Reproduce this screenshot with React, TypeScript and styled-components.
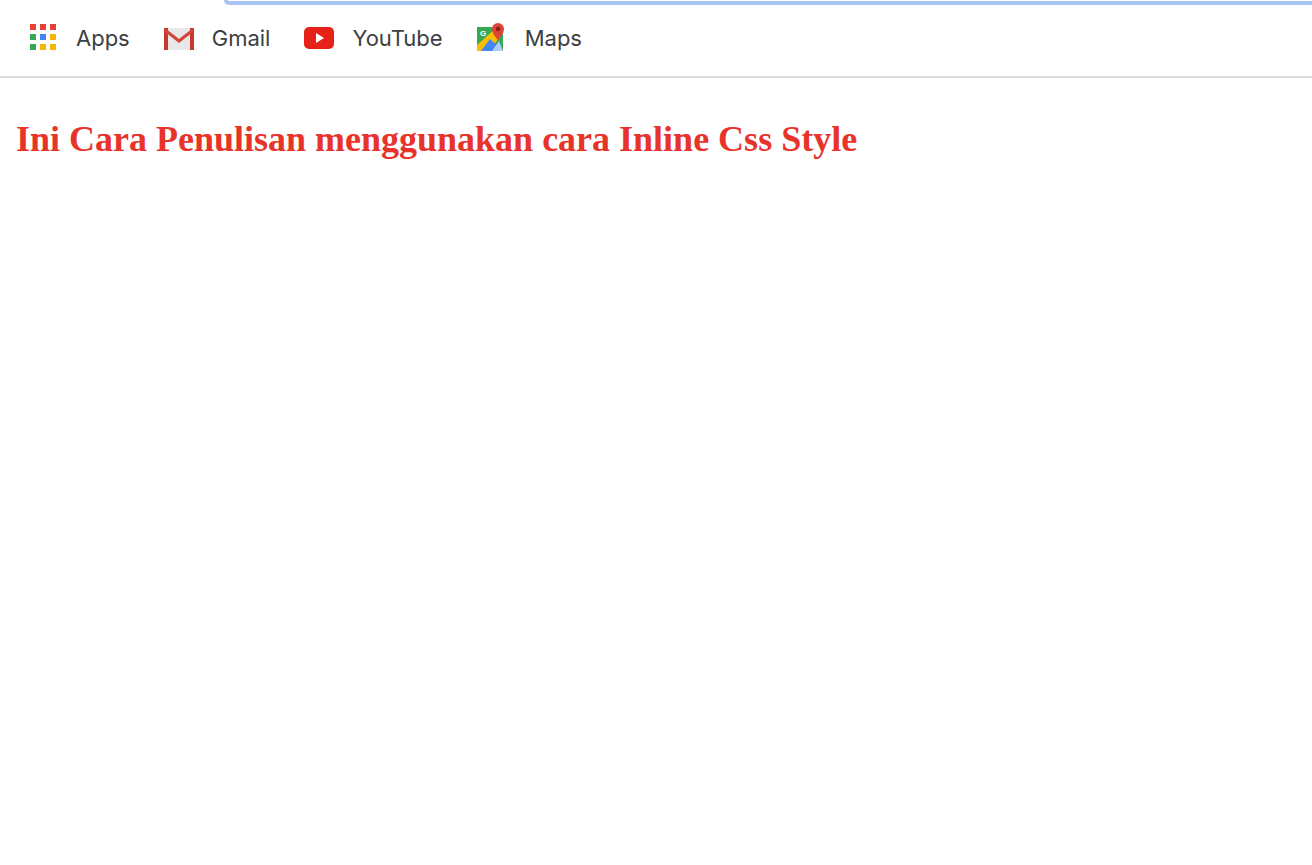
import React from "react";
import styled, { createGlobalStyle } from "styled-components";

const Global = createGlobalStyle`
  body { margin: 0; background: #fff; }
`;

const Chrome = styled.div`
  height: 76px;
  border-bottom: 2px solid #dadce0;
  display: flex;
  flex-direction: column;
`;

const Omnibox = styled.div`
  margin-left: 224px;
  height: 1px;
  border: 4px solid #a8c4f5;
  border-top: none;
  border-right: none;
  border-bottom-left-radius: 14px;
`;

const Bookmarks = styled.div`
  flex: 1;
  display: flex;
  align-items: center;
  padding-left: 30px;
  gap: 34px;
  margin-top: -5px;
`;

const Mark = styled.div`
  display: flex;
  align-items: center;
  gap: 18px;
  font-family: Inter, "Liberation Sans", sans-serif;
  font-size: 22px;
  color: #3c4043;
`;

const Heading = styled.h1`
  margin: 40px 16px;
  font-family: "Liberation Serif", serif;
  font-weight: bold;
  font-size: 36px;
  color: #e8332a;
`;

const AppsIcon = () => {
  const c = ["#e94235", "#e94235", "#e94235", "#34a853", "#4285f4", "#f4b400", "#34a853", "#f4b400", "#f4b400"];
  return (
    <svg width="28" height="28" viewBox="0 0 28 28">
      {c.map((f, i) => (
        <rect key={i} x={(i % 3) * 10} y={Math.floor(i / 3) * 10} width="6" height="6" fill={f} />
      ))}
    </svg>
  );
};

const GmailIcon = () => (
  <svg width="30" height="24" viewBox="0 0 30 24">
    <rect x="0" y="2" width="30" height="22" fill="#e8e8e8" />
    <path d="M0 2 L15 14 L30 2" fill="none" stroke="#d8d8d8" strokeWidth="1" />
    <path d="M0 2 h4 v22 h-4z M26 2 h4 v22 h-4z" fill="#c5392c" />
    <path d="M1 2 L15 13 L29 2 L29 6 L15 17 L1 6z" fill="#d44638" />
  </svg>
);

const YoutubeIcon = () => (
  <svg width="30" height="22" viewBox="0 0 30 22">
    <rect width="30" height="22" rx="5" fill="#e62117" />
    <path d="M12 6 L20 11 L12 16z" fill="#fff" />
  </svg>
);

const MapsIcon = () => (
  <svg width="30" height="30" viewBox="0 0 30 30">
    <rect x="0" y="4" width="26" height="24" fill="#34a853" />
    <path d="M0 28 L0 22 L20 4 L26 4 L26 10 L12 28z" fill="#fbbc04" />
    <path d="M4 28 L13 16 L26 28z" fill="#4285f4" />
    <path d="M15 28 L22 18 L26 28z" fill="#aecbfa" />
    <text x="3" y="13" fontSize="8" fill="#fff" fontFamily="Liberation Sans, sans-serif" fontWeight="bold">G</text>
    <path d="M21 0 a6 6 0 0 1 6 6 c0 5 -6 10 -6 12 c0 -2 -6 -7 -6 -12 a6 6 0 0 1 6 -6z" fill="#db4437" />
    <circle cx="21" cy="6" r="2.2" fill="#8b1c12" />
  </svg>
);

export default function App() {
  return (
    <>
      <Global />
      <Chrome>
        <Omnibox />
        <Bookmarks>
          <Mark><AppsIcon />Apps</Mark>
          <Mark><GmailIcon />Gmail</Mark>
          <Mark><YoutubeIcon />YouTube</Mark>
          <Mark><MapsIcon />Maps</Mark>
        </Bookmarks>
      </Chrome>
      <Heading>Ini Cara Penulisan menggunakan cara Inline Css Style</Heading>
    </>
  );
}
